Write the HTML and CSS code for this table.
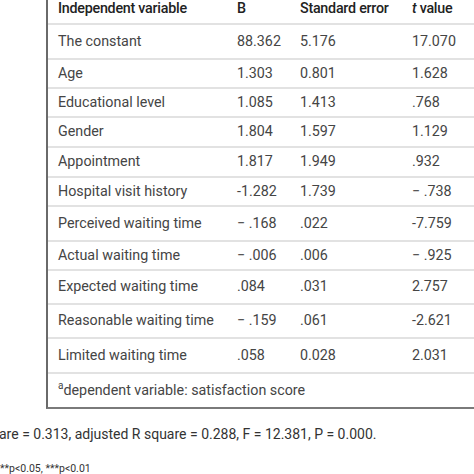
FILE: index.html
```html
<!DOCTYPE html>
<html>
<head>
<meta charset="utf-8">
<link rel="stylesheet" href="styles.css">
</head>
<body>
<div class="page">
  <div class="table">
    <div class="row head">
      <div class="c">Independent variable</div>
      <div class="c">B</div>
      <div class="c">Standard error</div>
      <div class="c"><i>t</i> value</div>
    </div>
    <div class="row h35">
      <div class="c">The constant</div><div class="c">88.362</div><div class="c">5.176</div><div class="c">17.070</div>
    </div>
    <div class="row h29">
      <div class="c">Age</div><div class="c">1.303</div><div class="c">0.801</div><div class="c">1.628</div>
    </div>
    <div class="row h29">
      <div class="c">Educational level</div><div class="c">1.085</div><div class="c">1.413</div><div class="c">.768</div>
    </div>
    <div class="row h30">
      <div class="c">Gender</div><div class="c">1.804</div><div class="c">1.597</div><div class="c">1.129</div>
    </div>
    <div class="row h30">
      <div class="c">Appointment</div><div class="c">1.817</div><div class="c">1.949</div><div class="c">.932</div>
    </div>
    <div class="row h29">
      <div class="c">Hospital visit history</div><div class="c">-1.282</div><div class="c">1.739</div><div class="c">− .738</div>
    </div>
    <div class="row h35">
      <div class="c">Perceived waiting time</div><div class="c">− .168</div><div class="c">.022</div><div class="c">-7.759</div>
    </div>
    <div class="row h29">
      <div class="c">Actual waiting time</div><div class="c">− .006</div><div class="c">.006</div><div class="c">− .925</div>
    </div>
    <div class="row h34">
      <div class="c">Expected waiting time</div><div class="c">.084</div><div class="c">.031</div><div class="c">2.757</div>
    </div>
    <div class="row h34">
      <div class="c">Reasonable waiting time</div><div class="c">− .159</div><div class="c">.061</div><div class="c">-2.621</div>
    </div>
    <div class="row h35">
      <div class="c">Limited waiting time</div><div class="c">.058</div><div class="c">0.028</div><div class="c">2.031</div>
    </div>
    <div class="row foot">
      <div class="c span"><sup>a</sup>dependent variable: satisfaction score</div>
    </div>
  </div>
  <p class="stats">R square = 0.313, adjusted R square = 0.288, F = 12.381, P = 0.000.</p>
  <p class="notes">*p&lt;0.1, **p&lt;0.05, ***p&lt;0.01</p>
</div>
</body>
</html>
```

FILE: styles.css
```css
html, body {
  margin: 0;
  padding: 0;
  background: #ffffff;
  overflow: hidden;
}
.page {
  width: 474px;
  height: 474px;
  overflow: hidden;
  font-family: Roboto, "Liberation Sans", sans-serif;
  color: #454545;
}
.table {
  margin-top: -6px;
  margin-left: 46px;
  width: 470px;
  border-left: 2px solid #6a6a6a;
  border-bottom: 2px solid #7a7a7a;
}
.row {
  display: grid;
  grid-template-columns: 179px 63px 112px 1fr;
  align-items: center;
  box-sizing: border-box;
  border-bottom: 2px solid #e2e2e2;
  font-size: 14.3px;
}
.row .c {
  padding-left: 10px;
  white-space: nowrap;
  padding-bottom: 2px;
}
.head {
  height: 31px;
  font-weight: 500;
  color: #222222;
  letter-spacing: -0.25px;
}
.h35 { height: 35px; }
.h34 { height: 34px; }
.h30 { height: 30px; }
.h29 { height: 29px; }
.foot {
  height: 33px;
  border-bottom: none;
}
.span { grid-column: 1 / 5; }
sup {
  font-size: 10px;
  vertical-align: 6px;
  line-height: 0;
}
.stats {
  margin: 15px 0 0 -36px;
  font-size: 14px;
  line-height: 20px;
  color: #333333;
  white-space: nowrap;
}
.notes {
  margin: 18px 0 0 -35px;
  font-size: 10.5px;
  line-height: 14px;
  color: #333333;
  white-space: nowrap;
}
```
